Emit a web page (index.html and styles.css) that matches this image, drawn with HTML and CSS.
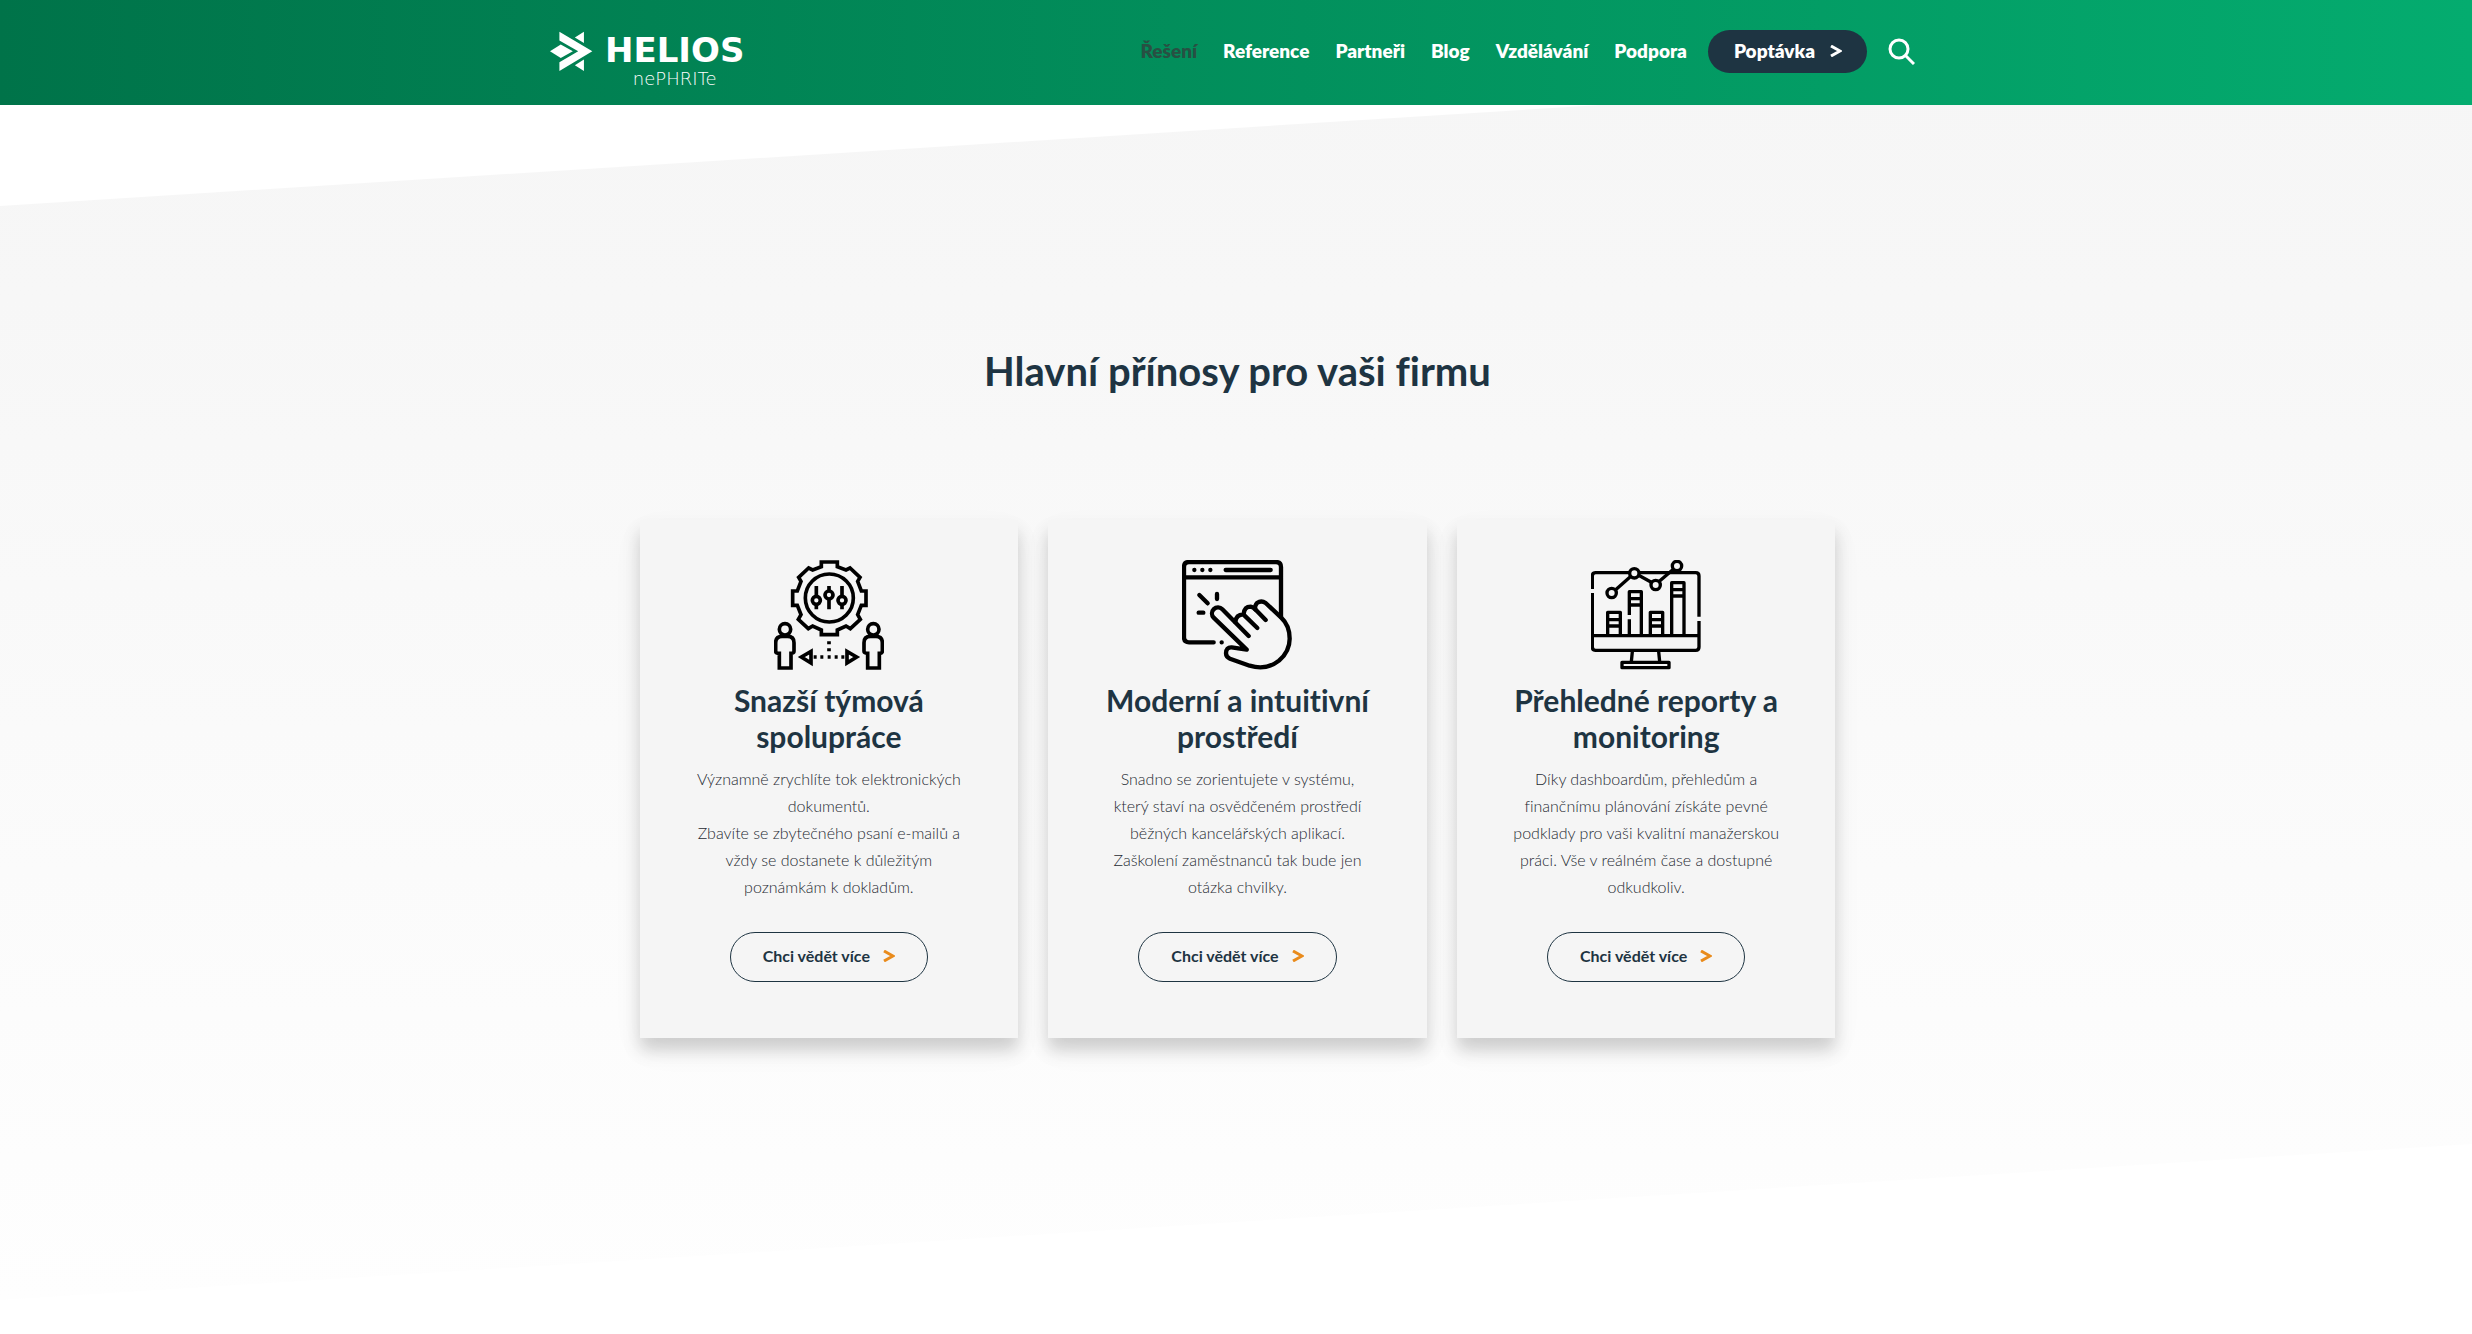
FILE: index.html
```
<!DOCTYPE html>
<html lang="cs">
<head>
	<meta charset="UTF-8">
	<meta name="viewport" content="width=device-width, initial-scale=1.0">
	<title>Helios Nephrite</title>
	<link rel="stylesheet" href="styles.css">
</head>
<body>
	<header class="header">
		<div class="header-inner">
			<a class="logo" href="#">
				<svg class="logo-mark" viewBox="60 65 128 120" aria-hidden="true">
					<path d="M88 66 186 124 88 183V157L144 124 88 92z"/>
					<path d="M60 124 92 104 128 124 92 144z"/>
					<path d="M161 66V100L134 83zM161 183V149L134 166z"/>
				</svg>
				<span class="logo-text">
					<span class="logo-name">HELIOS</span>
					<span class="logo-sub">nePHRITe</span>
				</span>
			</a>
			<nav class="nav">
				<a class="nav-link active" href="#">Řešení</a>
				<a class="nav-link" href="#">Reference</a>
				<a class="nav-link" href="#">Partneři</a>
				<a class="nav-link" href="#">Blog</a>
				<a class="nav-link" href="#">Vzdělávání</a>
				<a class="nav-link" href="#">Podpora</a>
				<a class="btn-dark" href="#">Poptávka
					<svg class="arrow" viewBox="0 0 12 12" aria-hidden="true"><path d="M1 1 10 6 1 11"/></svg>
				</a>
				<button class="search" type="button" aria-label="Hledat">
					<svg viewBox="0 0 27 27" aria-hidden="true"><circle cx="11" cy="11" r="9"/><path d="M17 17 26 26"/></svg>
				</button>
			</nav>
		</div>
	</header>

	<main>
		<section class="benefits">
			<h1 class="benefits-title">Hlavní přínosy pro vaši firmu</h1>
			<div class="cards">

				<article class="card">
					<svg class="icon icon-team" viewBox="102 60 330 330" aria-hidden="true">
						<!-- gear -->
						<path d="M244 66H292V80L318 90 330 84 360 112 353 124 364 153H378V196H364L353 224 361 238 331 266 318 258 292 270V284H244V270L218 258 205 266 175 238 183 224 172 196H158V153H172L183 124 176 112 206 84 218 90 244 80z"/>
						<circle cx="268" cy="174" r="72"/>
						<path d="M229 138V168M229 194V208M267 138V152M267 178V208M306 138V168M306 194V208"/>
						<circle cx="229" cy="181" r="12"/>
						<circle cx="267" cy="165" r="12"/>
						<circle cx="306" cy="181" r="12"/>
						<!-- people -->
						<g id="person">
							<circle cx="135" cy="268" r="17"/>
							<path d="M107 334V308Q107 289 126 289H143Q162 289 162 308V334Q162 340 153 340V384H118V340Q107 340 107 334z"/>
						</g>
						<use href="#person" x="265"/>
						<!-- arrows -->
						<path d="M184 351 213 334V369zM350 351 321 334V369z"/>
						<path d="M221 351H230M241 351H250M263 351H272M284 351H293M304 351H313M267 304V313M267 325V334"/>
					</svg>
					<h2 class="card-title">Snazší týmová spolupráce</h2>
					<p class="card-text">Významně zrychlíte tok elektronických dokumentů.<br>Zbavíte se zbytečného psaní e-mailů a vždy se dostanete k&nbsp;důležitým poznámkám k&nbsp;dokladům.</p>
					<a class="btn-outline" href="#">Chci vědět více
						<svg class="arrow" viewBox="0 0 12 12" aria-hidden="true"><path d="M1 1 10 6 1 11"/></svg>
					</a>
				</article>

				<article class="card">
					<svg class="icon icon-click" viewBox="97 60 330 330" aria-hidden="true">
						<path d="M192 307H118Q103 307 103 292V81Q103 66 118 66H379Q394 66 394 81V230M103 112H394M228 90H363"/>
						<path d="M134 90h.1M158 90h.1M182 90h.1M216 307h.1"/>
						<path d="M202 162V177M149 165 174 190M147 218H161"/>
						<!-- hand -->
						<path d="M297 288 218 208A18 18 0 0 0 192 233L291 329 246 322Q229 321 229 340Q229 351 241 356L300 377Q350 392 388 362Q420 334 420 296Q420 256 394 232L348 189Q335 180 322 189Q316 195 316 207L348 240"/>
						<path d="M257 246Q259 224 281 223L323 264M282 222Q284 200 303 200Q310 201 318 209"/>
					</svg>
					<h2 class="card-title">Moderní a intuitivní prostředí</h2>
					<p class="card-text">Snadno se zorientujete v systému, který staví na osvědčeném prostředí běžných kancelářských aplikací. Zaškolení zaměstnanců tak bude jen otázka chvilky.</p>
					<a class="btn-outline" href="#">Chci vědět více
						<svg class="arrow" viewBox="0 0 12 12" aria-hidden="true"><path d="M1 1 10 6 1 11"/></svg>
					</a>
				</article>

				<article class="card">
					<svg class="icon icon-report" viewBox="94 60 330 330" aria-hidden="true">
						<!-- monitor -->
						<path d="M98 147V108Q98 98 108 98H210M238 98H408Q418 98 418 108V230M418 243V321Q418 331 408 331H108Q98 331 98 321V159M98 287H418"/>
						<path d="M218 335 215 365M297 335 300 365M187 367H328V383H187z"/>
						<!-- bars -->
						<path d="M144 287V217H182V287M144 239H182M144 258H182"/>
						<path d="M209 225V155H245V287M209 287V238M209 176H245M209 195H245"/>
						<path d="M272 287V217H309V287M272 239H309M272 258H309"/>
						<path d="M336 287V128H373V287M336 149H373M336 168H373"/>
						<!-- trend line -->
						<path d="M168 149 212 110M237 106 275 127M299 124 341 88"/>
						<circle cx="156" cy="159" r="14"/>
						<circle cx="224" cy="100" r="14"/>
						<circle cx="288" cy="135" r="14"/>
						<circle class="top" cx="352" cy="78" r="14"/>
					</svg>
					<h2 class="card-title">Přehledné reporty a monitoring</h2>
					<p class="card-text">Díky dashboardům, přehledům a finančnímu plánování získáte pevné podklady pro vaši kvalitní manažerskou práci. Vše v&nbsp;reálném čase a dostupné odkudkoliv.</p>
					<a class="btn-outline" href="#">Chci vědět více
						<svg class="arrow" viewBox="0 0 12 12" aria-hidden="true"><path d="M1 1 10 6 1 11"/></svg>
					</a>
				</article>

			</div>
		</section>
	</main>
</body>
</html>
```
FILE: styles.css
```
* {
	box-sizing: border-box;
}

body {
	margin: 0;
	background: #fff;
	color: #1e3442;
	font-family: Lato, "Open Sans", sans-serif;
	font-size: 16px;
	font-variant-ligatures: none;
}

a {
	color: inherit;
	text-decoration: none;
}

svg {
	display: block;
	fill: none;
	stroke: currentColor;
}

/* header */
.header {
	position: relative;
	z-index: 1;
	min-height: 105px;
	padding-top: 30px;
	background: linear-gradient(90deg, #007349, #04ac6f);
	color: #fff;
}

.header-inner {
	display: flex;
	justify-content: space-between;
	align-items: flex-start;
	max-width: 1372px;
	margin: 0 auto;
	padding-right: 7px;
}

.logo {
	display: flex;
	gap: 12px;
}

.logo-mark {
	width: 43px;
	height: 43px;
	fill: #fff;
	stroke: none;
}

.logo-text {
	display: flex;
	flex-direction: column;
	align-items: center;
	font-family: "DejaVu Sans", sans-serif;
}

.logo-name {
	font-size: 34px;
	font-weight: 700;
	line-height: 40px;
}

.logo-sub {
	font-size: 18px;
	font-weight: 200;
	line-height: 18px;
}

.nav {
	display: flex;
	align-items: center;
	gap: 26px;
	font-size: 19px;
	font-weight: 800;
	line-height: 23px;
}

.nav-link {
	padding-bottom: 2px;
}

.nav-link.active {
	color: #285043;
}

.btn-dark {
	display: flex;
	align-items: center;
	gap: 15px;
	height: 43px;
	margin: 0 -5px;
	padding: 0 25px 2px 26px;
	border-radius: 22px;
	background: #1e3442;
}

.arrow {
	width: 12px;
	height: 12px;
	stroke-width: 3;
}

.search {
	width: 27px;
	height: 27px;
	padding: 0;
	border: 0;
	background: none;
	color: #fff;
	cursor: pointer;
}

.search svg {
	stroke-width: 3;
}

/* slanted section, its top corner goes under the header */
.benefits {
	margin-top: -55px;
	padding: 297px 20px 262px 23px;
	background: linear-gradient(#f6f6f6, #f7f7f7 20%, #fefefe);
	clip-path: polygon(0 156px, 100% 0, 100% calc(100% - 156px), 0 100%);
}

.benefits-title {
	margin: 0 0 125px;
	font-size: 40px;
	font-weight: 700;
	line-height: 48px;
	text-align: center;
}

.cards {
	display: grid;
	grid-template-columns: repeat(3, 1fr);
	gap: 30px;
	max-width: 1196px;
	margin: 0 auto;
}

.card {
	display: flex;
	flex-direction: column;
	align-items: center;
	padding: 40px 40px 56px;
	background: #f5f5f5;
	box-shadow: 0 12px 16px rgba(0, 0, 0, .17), 0 12px 32px rgba(0, 0, 0, .04);
	text-align: center;
}

.icon {
	width: 110px;
	height: 110px;
	color: #000;
}

.icon-team {
	stroke-width: 11;
}

.icon-click {
	stroke-width: 13;
	stroke-linecap: round;
	stroke-linejoin: round;
}

.icon-report {
	stroke-width: 10;
	stroke-linejoin: round;
}

.icon-report .top {
	fill: #f5f5f5;
}

.card-title {
	margin: 12px 0 11px;
	font-size: 30px;
	font-weight: 700;
	line-height: 36px;
}

.card-text {
	margin: 0 0 32px;
	padding: 0 14px;
	color: #1e2a32;
	font-weight: 300;
	line-height: 27px;
}

.btn-outline {
	display: flex;
	align-items: center;
	gap: 13px;
	height: 50px;
	padding: 0 32px 3px 32px;
	border: 1px solid #1e3442;
	border-radius: 25px;
	font-weight: 700;
}

.btn-outline .arrow {
	color: #e98b1c;
}
```
